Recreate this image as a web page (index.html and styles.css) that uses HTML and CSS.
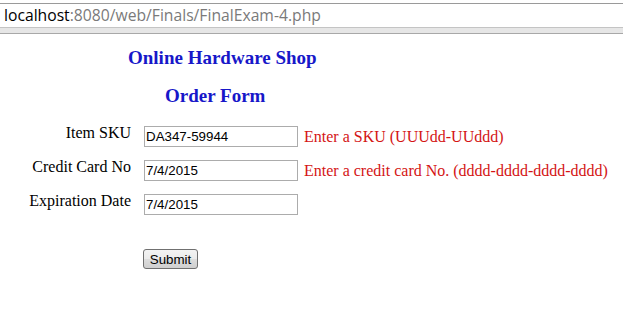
FILE: index.html
```html
<!DOCTYPE html>
<html>
<head>
<meta charset="utf-8">
<title>Final Exam 4</title>
<link rel="stylesheet" href="styles.css">
</head>
<body>
<div class="chrome">
  <div class="urlbar"><span class="host">localhost</span><span class="path">:8080/web/Finals/FinalExam-4.php</span></div>
  <div class="chrome-strip"></div>
</div>
<main class="page">
  <h2 class="title">Online Hardware Shop</h2>
  <h2 class="subtitle">Order Form</h2>
  <form class="order">
    <label class="lbl" for="sku">Item SKU</label>
    <input class="field" id="sku" type="text" value="DA347-59944">
    <span class="err">Enter a SKU (UUUdd-UUddd)</span>

    <label class="lbl" for="cc">Credit Card No</label>
    <input class="field" id="cc" type="text" value="7/4/2015">
    <span class="err">Enter a credit card No. (dddd-dddd-dddd-dddd)</span>

    <label class="lbl" for="exp">Expiration Date</label>
    <input class="field" id="exp" type="text" value="7/4/2015">
    <span class="err"></span>

    <span class="lbl"></span>
    <div class="actions"><button class="submit" type="button">Submit</button></div>
    <span class="err"></span>
  </form>
</main>
</body>
</html>
```

FILE: styles.css
```css
html, body {
  margin: 0;
  padding: 0;
  background: #ffffff;
}

body {
  font-family: "Liberation Serif", "Times New Roman", serif;
  font-size: 16px;
  color: #000;
}

.chrome {
  display: flex;
  flex-direction: column;
}

.urlbar {
  height: 23px;
  margin-top: 3px;
  border-top: 1px solid #9a9a9a;
  padding-left: 4px;
  font-family: "Open Sans", "Noto Sans", sans-serif;
  font-size: 15.7px;
  line-height: 23px;
  white-space: nowrap;
}

.host { color: #000; }
.path { color: #7a7a7a; }

.chrome-strip {
  height: 5px;
  border-top: 1px solid #c4c4c4;
  border-bottom: 1px solid #a8a8a8;
  background: #e6e6e6;
}

.page {
  display: flex;
  flex-direction: column;
}

.title, .subtitle {
  margin: 0;
  font-size: 19px;
  font-weight: bold;
  color: #1717c9;
  line-height: 22px;
}

.title {
  padding-top: 13px;
  padding-left: 128px;
}

.subtitle {
  padding-top: 16px;
  padding-left: 165px;
}

.order {
  display: grid;
  grid-template-columns: 131px 154px auto;
  column-gap: 13px;
  row-gap: 13px;
  margin-top: 19px;
}

.order .err {
  margin-left: -7px;
}

.lbl {
  text-align: right;
  align-self: start;
  margin-top: -2px;
  line-height: 18px;
}

.field {
  box-sizing: border-box;
  width: 154px;
  height: 21px;
  margin: 0;
  padding: 1px 1px;
  border: 1px solid #acacac;
  font-family: "Liberation Sans", Arial, sans-serif;
  font-size: 13.33px;
  color: #000;
}

.err {
  color: #d41414;
  align-self: center;
  line-height: 18px;
  padding-top: 1px;
  white-space: nowrap;
}

.actions {
  display: flex;
  padding-top: 21px;
  margin-left: -1px;
}

.submit {
  box-sizing: border-box;
  width: 55px;
  height: 20px;
  padding: 0;
  border: 1px solid #707070;
  border-radius: 3px;
  background: linear-gradient(#f3f3f3 0%, #ebebeb 50%, #dddddd 51%, #cfcfcf 100%);
  font-family: "Liberation Sans", Arial, sans-serif;
  font-size: 13.33px;
  color: #000;
}
```
